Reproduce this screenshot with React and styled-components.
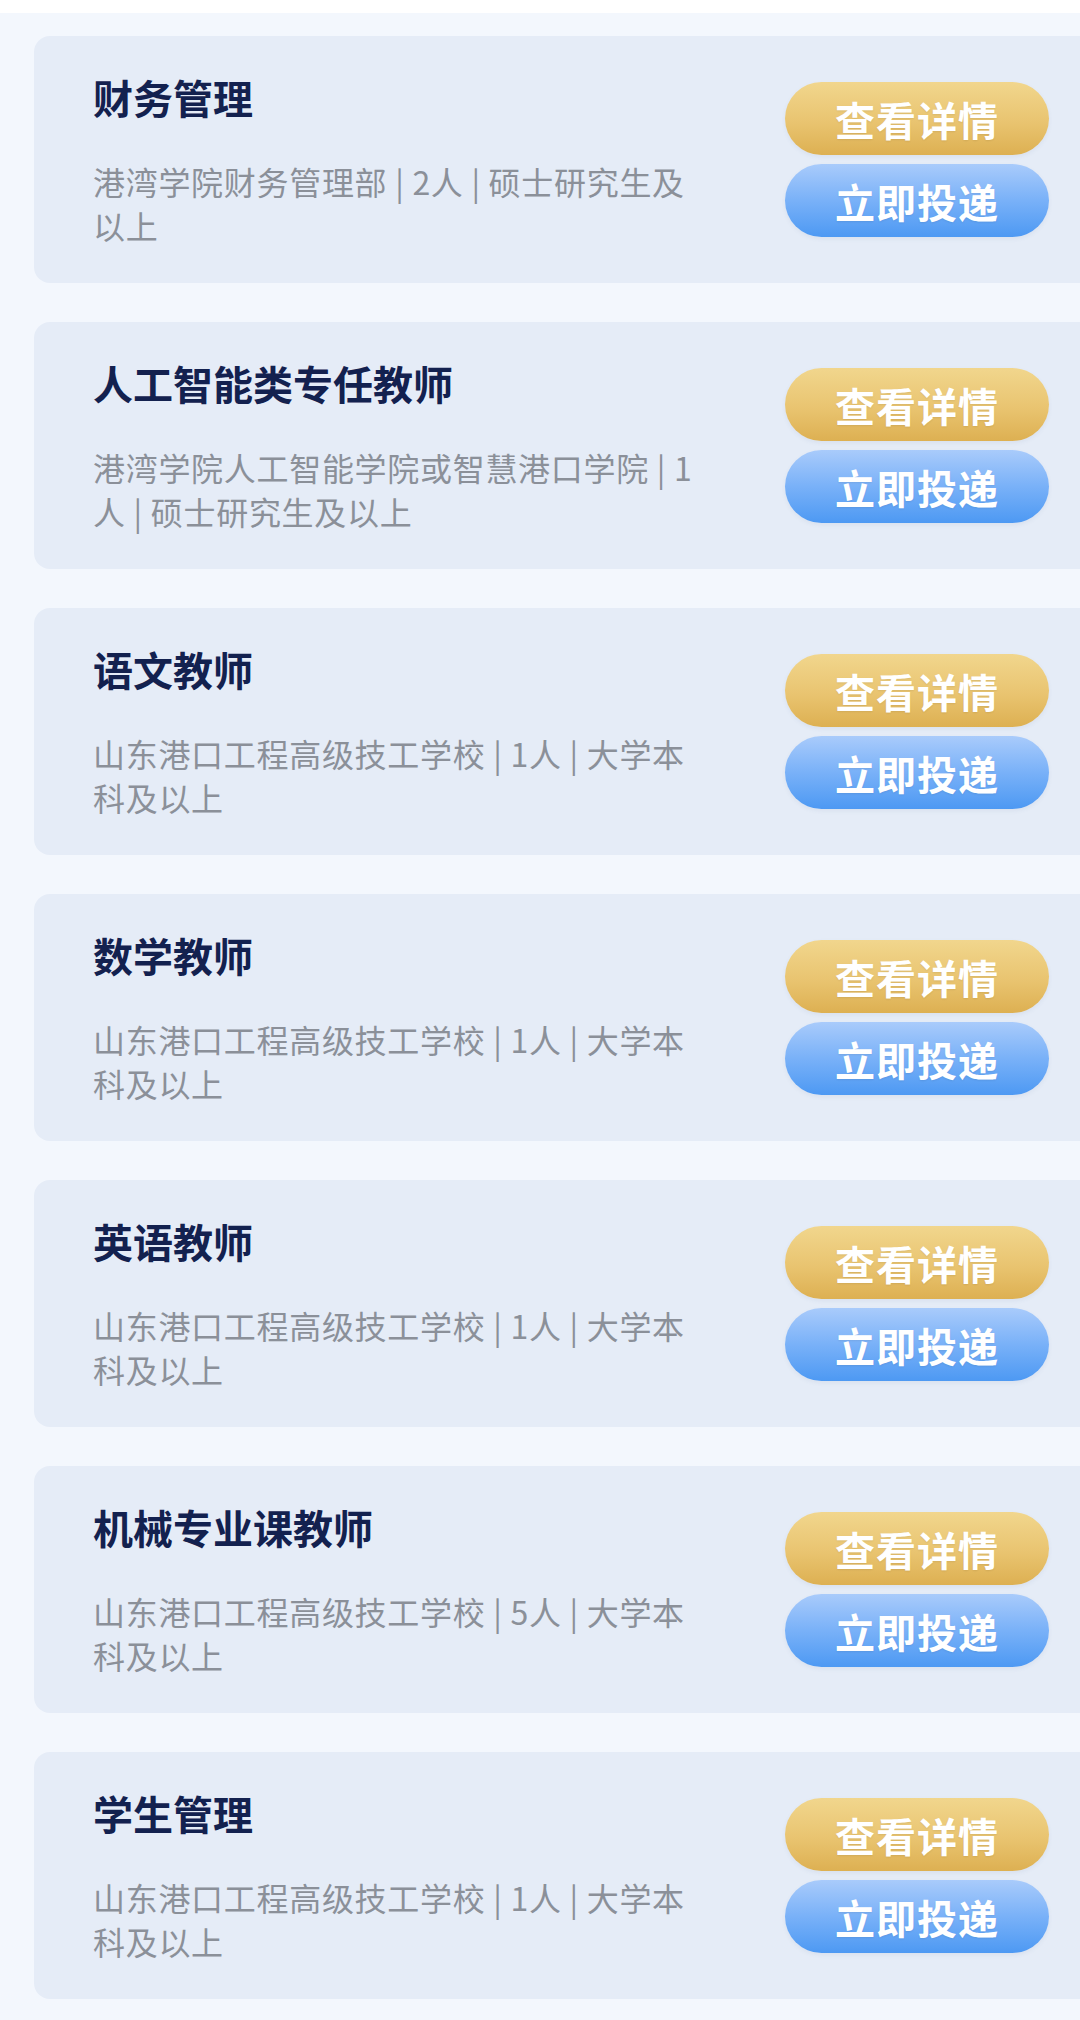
import React from 'react';
import styled, { createGlobalStyle } from 'styled-components';

const GlobalStyle = createGlobalStyle`
    html, body {
        margin: 0;
        padding: 0;
        background: #f3f7fd;
        overflow-x: hidden;
    }
    body {
        font-family: "Noto Sans CJK SC", "Noto Sans", sans-serif;
    }
`;

const Page = styled.div`
    width: 1080px;
    min-height: 2020px;
    background: #f3f7fd;
    border-top: 13px solid #ffffff;
    box-sizing: border-box;
    padding: 23px 0 20px 34px;
    display: flex;
    flex-direction: column;
    gap: 39px;
`;

const Card = styled.div`
    height: 247px;
    box-sizing: border-box;
    background: #e5ecf7;
    border-radius: 16px 0 0 16px;
    padding: 0 31px 0 59px;
    display: flex;
    align-items: center;
    justify-content: space-between;
`;

const Info = styled.div`
    display: flex;
    flex-direction: column;
    gap: 38px;
    max-width: 612px;
`;

const Title = styled.div`
    font-size: 40px;
    line-height: 48px;
    font-weight: 700;
    color: #13214f;
`;

const Meta = styled.div`
    font-size: 32px;
    line-height: 44px;
    letter-spacing: 0.7px;
    color: #8b9099;
`;

const Actions = styled.div`
    display: flex;
    flex-direction: column;
    gap: 9px;
`;

const Pill = styled.button`
    width: 264px;
    height: 73px;
    border: none;
    border-radius: 37px;
    padding: 0;
    font-family: "Noto Sans CJK SC", sans-serif;
    font-size: 40px;
    font-weight: 700;
    color: #ffffff;
    letter-spacing: 1px;
    text-shadow: 0 1px 2px rgba(0, 0, 0, 0.08);
    box-shadow: 0 2px 4px rgba(80, 100, 140, 0.08);
    background: ${({ $tone }) =>
        $tone === 'gold'
            ? 'linear-gradient(180deg, #f1d68d 0%, #e9c470 55%, #ddb052 100%)'
            : 'linear-gradient(180deg, #a9cbfb 0%, #79b1f8 50%, #4d99f3 100%)'};
    cursor: pointer;
`;

const jobs = [
    { title: '财务管理', meta: '港湾学院财务管理部 | 2人 | 硕士研究生及以上' },
    { title: '人工智能类专任教师', meta: '港湾学院人工智能学院或智慧港口学院 | 1人 | 硕士研究生及以上' },
    { title: '语文教师', meta: '山东港口工程高级技工学校 | 1人 | 大学本科及以上' },
    { title: '数学教师', meta: '山东港口工程高级技工学校 | 1人 | 大学本科及以上' },
    { title: '英语教师', meta: '山东港口工程高级技工学校 | 1人 | 大学本科及以上' },
    { title: '机械专业课教师', meta: '山东港口工程高级技工学校 | 5人 | 大学本科及以上' },
    { title: '学生管理', meta: '山东港口工程高级技工学校 | 1人 | 大学本科及以上' },
];

const App = () => {
    return (
        <>
            <GlobalStyle />
            <Page>
                {jobs.map((job) => (
                    <Card key={job.title}>
                        <Info>
                            <Title>{job.title}</Title>
                            <Meta>{job.meta}</Meta>
                        </Info>
                        <Actions>
                            <Pill $tone="gold">查看详情</Pill>
                            <Pill $tone="blue">立即投递</Pill>
                        </Actions>
                    </Card>
                ))}
            </Page>
        </>
    );
};

export default App;
